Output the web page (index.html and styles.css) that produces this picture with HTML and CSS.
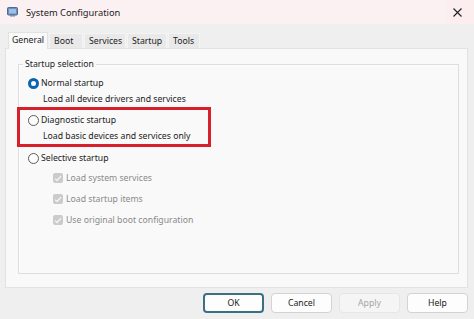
FILE: index.html
```html
<!DOCTYPE html>
<html lang="en">
<head>
    <meta charset="UTF-8">
    <meta name="viewport" content="width=device-width, initial-scale=1.0">
    <link rel="stylesheet" href="styles.css">
    <title>System Configuration</title>
</head>
<body>
    <div class="window">
        <div class="titlebar">
            <svg class="app-icon" width="11" height="10" viewBox="0 0 11 10">
                <rect x="0.5" y="0.5" width="10" height="7.5" rx="1" fill="#6f8fb8" stroke="#4d6b95"/>
                <rect x="2" y="2" width="7" height="4.5" fill="#9cc0ea"/>
                <rect x="3" y="8" width="5" height="1.5" fill="#7d8ea5"/>
            </svg>
            <span class="title">System Configuration</span>
            <div class="close">
                <svg width="9" height="9" viewBox="0 0 9 9">
                    <path d="M0.5 0.5 L8.5 8.5 M8.5 0.5 L0.5 8.5" stroke="#222" stroke-width="1.1"/>
                </svg>
            </div>
        </div>

        <div class="tabs">
            <div class="tab active">General</div>
            <div class="tab">Boot</div>
            <div class="tab">Services</div>
            <div class="tab">Startup</div>
            <div class="tab">Tools</div>
        </div>

        <div class="panel">
            <fieldset class="group">
                <legend>Startup selection</legend>

                <div class="option first">
                    <span class="radio checked"></span>Normal startup
                </div>
                <div class="desc">Load all device drivers and services</div>

                <div class="highlight">
                    <div class="option">
                        <span class="radio"></span>Diagnostic startup
                    </div>
                    <div class="desc">Load basic devices and services only</div>
                </div>

                <div class="option selective">
                    <span class="radio"></span>Selective startup
                </div>
                <div class="check">
                    <span class="box"><svg width="8" height="7" viewBox="0 0 8 7"><path d="M1 3.6 L3 5.5 L7 1.2" fill="none" stroke="#f4f4f4" stroke-width="1.3"/></svg></span>Load system services
                </div>
                <div class="check">
                    <span class="box"><svg width="8" height="7" viewBox="0 0 8 7"><path d="M1 3.6 L3 5.5 L7 1.2" fill="none" stroke="#f4f4f4" stroke-width="1.3"/></svg></span>Load startup items
                </div>
                <div class="check">
                    <span class="box"><svg width="8" height="7" viewBox="0 0 8 7"><path d="M1 3.6 L3 5.5 L7 1.2" fill="none" stroke="#f4f4f4" stroke-width="1.3"/></svg></span>Use original boot configuration
                </div>
            </fieldset>
        </div>

        <div class="footer">
            <button class="btn default">OK</button>
            <button class="btn">Cancel</button>
            <button class="btn" disabled>Apply</button>
            <button class="btn">Help</button>
        </div>
    </div>
</body>
</html>
```

FILE: styles.css
```css
* {
    box-sizing: border-box;
}

body {
    margin: 0;
    background-color: #efefef;
    color: #1a1a1a;
    font-family: "Noto Sans", "Open Sans", sans-serif;
    font-size: 8.7px;
}

.window {
    width: 474px;
    height: 319px;
    display: flex;
    flex-direction: column;
    background-color: #efefef;
    overflow: hidden;
}

/* title bar */
.titlebar {
    height: 24px;
    display: flex;
    align-items: center;
    background-color: #fbf1f2;
    padding-left: 7px;
}

.app-icon {
    display: block;
    margin-right: 8px;
}

.title {
    font-size: 9.3px;
    color: #222;
}

.close {
    margin-left: auto;
    width: 27px;
    height: 24px;
    display: flex;
    align-items: center;
    justify-content: center;
    background-color: #fcedef;
    padding-right: 6px;
}

/* tabs */
.tabs {
    display: flex;
    align-items: flex-end;
    height: 24px;
    padding-left: 8px;
}

.tab {
    height: 15px;
    line-height: 14px;
    padding: 0 4px;
    background-color: #e9e9e9;
    border: 1px solid #f4f4f4;
    border-bottom: none;
    color: #222;
    margin-right: 1px;
}

.tab:nth-child(2) { width: 34px; }
.tab:nth-child(3) { width: 42px; }
.tab:nth-child(4) { width: 40px; }
.tab:nth-child(5) { width: 32px; }

.tab.active {
    width: 40px;
    height: 17px;
    line-height: 15px;
    padding-left: 3px;
    background-color: #f9f9f9;
    border-color: #e2e2e2;
    margin-bottom: -1px;
    position: relative;
    z-index: 1;
}

/* panel */
.panel {
    height: 240px;
    margin: 0 6px 0 5px;
    background-color: #f9f9f9;
    border: 1px solid #e2e2e2;
    padding-top: 9px;
}

.group {
    margin: 0 8px 0 12px;
    height: 216px;
    padding: 0;
    border: 1px solid #dedede;
    box-shadow: inset 1px 1px 0 #fdfdfd;
}

.group legend {
    margin-left: 4px;
    padding: 0 2px;
    line-height: 12px;
    color: #222;
}

.option {
    display: flex;
    align-items: center;
    height: 16px;
    padding-left: 9px;
}

.option.first {
    margin-top: 5px;
}

.option.selective {
    margin-top: 3px;
}

.desc {
    height: 16px;
    line-height: 16px;
    padding-left: 24px;
}

.radio {
    width: 11px;
    height: 11px;
    border-radius: 50%;
    border: 1px solid #5a5a5a;
    background-color: #fcfcfc;
    margin-right: 2px;
    flex-shrink: 0;
}

.radio.checked {
    border: 3px solid #0a64b4;
    background-color: #fff;
}

.highlight {
    width: 194px;
    margin-left: -2px;
    border: 3px solid #d8202c;
    padding-top: 2px;
}

.highlight .option {
    padding-left: 8px;
}

.highlight .desc {
    padding-left: 23px;
}

.check {
    display: flex;
    align-items: center;
    height: 16px;
    margin-top: 5px;
    padding-left: 34px;
    color: #8a8a8a;
}

.selective + .check {
    margin-top: 4px;
}

.box {
    width: 10px;
    height: 10px;
    border-radius: 2px;
    background-color: #cbcbcb;
    display: flex;
    align-items: center;
    justify-content: center;
    margin-right: 3px;
}

.box svg {
    display: block;
}

/* footer buttons */
.footer {
    flex: 1;
    display: flex;
    justify-content: flex-end;
    align-items: flex-start;
    gap: 7px;
    padding: 5px 6px 0 0;
}

.btn {
    width: 61px;
    height: 20px;
    font-family: "Noto Sans", "Open Sans", sans-serif;
    font-size: 8.7px;
    color: #1a1a1a;
    background-color: #fdfdfd;
    border: 1px solid #d3d3d3;
    border-radius: 4px;
    padding: 0;
}

.btn.default {
    border: 2px solid #3b6f86;
}

.btn:disabled {
    background-color: #f5f5f5;
    border-color: #e6e6e6;
    color: #a5a5a5;
}
```
